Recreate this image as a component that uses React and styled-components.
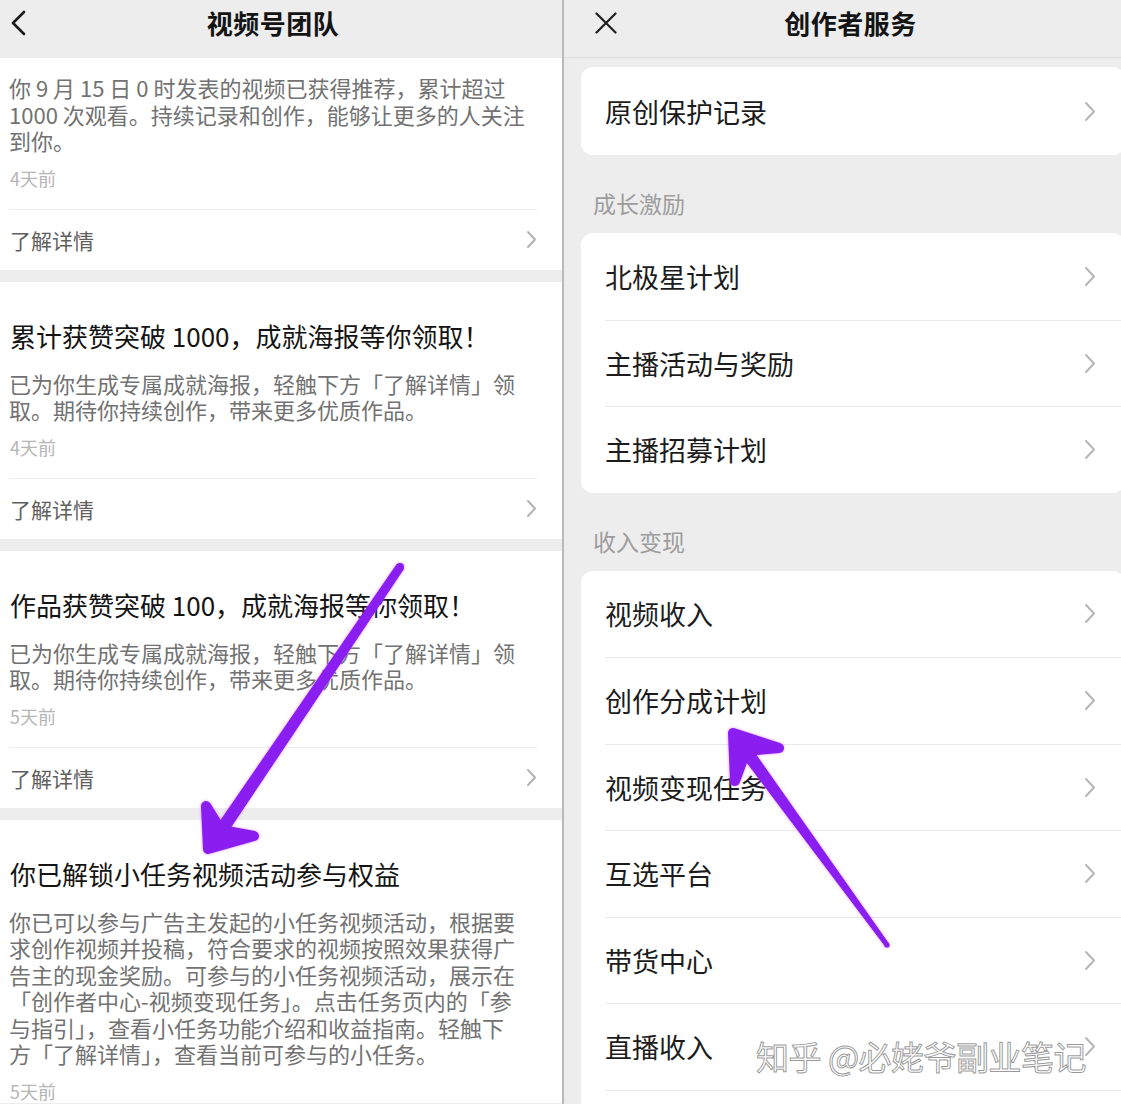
import React from "react";
import styled, { createGlobalStyle } from "styled-components";

const GlobalStyle = createGlobalStyle`
  html, body {
    margin: 0;
    padding: 0;
    background: #ededed;
  }
  body {
    font-family: "Noto Sans CJK SC", "Noto Sans", sans-serif;
    -webkit-font-smoothing: antialiased;
  }
  * {
    box-sizing: border-box;
  }
`;

const Screen = styled.div`
  position: relative;
  display: flex;
  width: 1121px;
  height: 1104px;
  overflow: hidden;
  background: #ededed;
`;

const LeftPane = styled.div`
  width: 562px;
  flex-shrink: 0;
  display: flex;
  flex-direction: column;
  background: #ededed;
  overflow: hidden;
`;

const Divider = styled.div`
  width: 2px;
  flex-shrink: 0;
  background: #b9b9b9;
`;

const RightPane = styled.div`
  position: relative;
  flex: 1;
  display: flex;
  flex-direction: column;
  background: #ededed;
  overflow: hidden;
`;

const Header = styled.header`
  height: 58px;
  flex-shrink: 0;
  display: grid;
  grid-template-columns: ${(p) => p.$cols};
  align-items: center;
  padding-bottom: 12px;
  background: #ededed;
  border-bottom: ${(p) => (p.$line ? "1px solid #dedede" : "none")};
`;

const HeaderIcon = styled.div`
  display: flex;
  align-items: center;
  padding-left: ${(p) => p.$pad}px;
`;

const HeaderTitle = styled.h1`
  margin: 0;
  text-align: center;
  font-size: 26px;
  line-height: 34px;
  font-weight: 600;
  color: #141414;
  letter-spacing: 0.5px;
`;

const Feed = styled.div`
  display: flex;
  flex-direction: column;
  gap: 12px;
`;

const Card = styled.section`
  background: #fff;
  padding-top: ${(p) => p.$top}px;
`;

const Title = styled.h3`
  margin: 0 0 17px;
  padding-left: 10px;
  font-size: 26px;
  line-height: 34px;
  font-weight: 400;
  color: #141414;
  white-space: nowrap;
`;

const Body = styled.p`
  margin: 0;
  padding-left: 9px;
  font-size: 22px;
  line-height: 26.5px;
  color: #727272;
  white-space: nowrap;
`;

const Time = styled.div`
  margin-top: 12px;
  padding-left: 10px;
  font-size: 18px;
  line-height: 24px;
  color: #b5b5b5;
`;

const Footer = styled.div`
  margin: 19px 25px 0 9px;
  height: 61px;
  border-top: 1px solid #ececec;
  display: flex;
  align-items: center;
  justify-content: space-between;
  padding-left: 1px;
  font-size: 21px;
  color: #5f5f5f;
`;

const Group = styled.div`
  margin: ${(p) => p.$mt}px -4px 0 17px;
  background: #fff;
  border-radius: 12px;
`;

const GroupLabel = styled.div`
  margin: 33px 0 15px 29px;
  font-size: 23px;
  line-height: 30px;
  color: #9d9d9d;
`;

const Row = styled.div`
  height: ${(p) => p.$h || 86.5}px;
  margin-left: 24px;
  padding-right: 29px;
  display: flex;
  align-items: center;
  justify-content: space-between;
  font-size: 27px;
  color: #1c1c1c;
  & + & {
    border-top: 1px solid #e9e9e9;
  }
`;

const Watermark = styled.div`
  position: absolute;
  left: 192px;
  top: 1036px;
  font-size: 33px;
  line-height: 40px;
  letter-spacing: -0.5px;
  color: rgba(255, 255, 255, 0.95);
  -webkit-text-stroke: 1px rgba(120, 120, 120, 0.75);
  white-space: nowrap;
  pointer-events: none;
`;

const Overlay = styled.svg`
  position: absolute;
  left: 0;
  top: 0;
  pointer-events: none;
  filter: drop-shadow(0 0 1.5px rgba(205, 90, 255, 0.7));
`;

const Chevron = ({ w = 12, h = 21, color = "#b6b6b6" }) => (
  <svg width={w} height={h} viewBox={`0 0 ${w} ${h}`}>
    <polyline
      points={`2,2 ${w - 2},${h / 2} 2,${h - 2}`}
      fill="none"
      stroke={color}
      strokeWidth="2"
      strokeLinecap="round"
      strokeLinejoin="round"
    />
  </svg>
);

const BackIcon = () => (
  <svg width="16" height="26" viewBox="0 0 16 26">
    <polyline
      points="14,2 3,13 14,24"
      fill="none"
      stroke="#1a1a1a"
      strokeWidth="2.6"
      strokeLinecap="round"
      strokeLinejoin="round"
    />
  </svg>
);

const CloseIcon = () => (
  <svg width="22" height="22" viewBox="0 0 22 22">
    <path
      d="M1.5 1.5 L20.5 20.5 M20.5 1.5 L1.5 20.5"
      stroke="#1f1f1f"
      strokeWidth="2.2"
      strokeLinecap="round"
    />
  </svg>
);

const notices = [
  {
    top: 16,
    lines: [
      "你 9 月 15 日 0 时发表的视频已获得推荐，累计超过",
      "1000 次观看。持续记录和创作，能够让更多的人关注",
      "到你。",
    ],
    time: "4天前",
    more: true,
  },
  {
    top: 37,
    title: "累计获赞突破 1000，成就海报等你领取！",
    lines: [
      "已为你生成专属成就海报，轻触下方「了解详情」领",
      "取。期待你持续创作，带来更多优质作品。",
    ],
    time: "4天前",
    more: true,
  },
  {
    top: 37,
    title: "作品获赞突破 100，成就海报等你领取！",
    lines: [
      "已为你生成专属成就海报，轻触下方「了解详情」领",
      "取。期待你持续创作，带来更多优质作品。",
    ],
    time: "5天前",
    more: true,
  },
  {
    top: 37,
    title: "你已解锁小任务视频活动参与权益",
    lines: [
      "你已可以参与广告主发起的小任务视频活动，根据要",
      "求创作视频并投稿，符合要求的视频按照效果获得广",
      "告主的现金奖励。可参与的小任务视频活动，展示在",
      "「创作者中心-视频变现任务」。点击任务页内的「参",
      "与指引」，查看小任务功能介绍和收益指南。轻触下",
      "方「了解详情」，查看当前可参与的小任务。",
    ],
    time: "5天前",
    more: false,
  },
];

const groups = [
  { label: "成长激励", items: ["北极星计划", "主播活动与奖励", "主播招募计划"] },
  {
    label: "收入变现",
    items: ["视频收入", "创作分成计划", "视频变现任务", "互选平台", "带货中心", "直播收入"],
    more: true,
  },
];

const App = () => {
  return (
    <>
      <GlobalStyle />
      <Screen>
        <LeftPane>
          <Header $cols="40px 1fr 56px">
            <HeaderIcon $pad={10}>
              <BackIcon />
            </HeaderIcon>
            <HeaderTitle>视频号团队</HeaderTitle>
            <div />
          </Header>
          <Feed>
            {notices.map((n, i) => (
              <Card key={i} $top={n.top}>
                {n.title && <Title>{n.title}</Title>}
                <Body>
                  {n.lines.map((l, j) => (
                    <React.Fragment key={j}>
                      {l}
                      {j < n.lines.length - 1 && <br />}
                    </React.Fragment>
                  ))}
                </Body>
                <Time>{n.time}</Time>
                {n.more && (
                  <Footer>
                    <span>了解详情</span>
                    <Chevron w={11} h={19} color="#b3b3b3" />
                  </Footer>
                )}
              </Card>
            ))}
          </Feed>
        </LeftPane>

        <Divider />

        <RightPane>
          <Header $cols="56px 1fr 40px" $line>
            <HeaderIcon $pad={31}>
              <CloseIcon />
            </HeaderIcon>
            <HeaderTitle>创作者服务</HeaderTitle>
            <div />
          </Header>
          <Group $mt={9}>
            <Row $h={88}>
              <span>原创保护记录</span>
              <Chevron />
            </Row>
          </Group>
          {groups.map((g) => (
            <React.Fragment key={g.label}>
              <GroupLabel>{g.label}</GroupLabel>
              <Group $mt={0}>
                {g.items.map((item) => (
                  <Row key={item}>
                    <span>{item}</span>
                    <Chevron />
                  </Row>
                ))}
                {g.more && <Row />}
              </Group>
            </React.Fragment>
          ))}
          <Watermark>知乎 @必姥爷副业笔记</Watermark>
        </RightPane>

        <Overlay width="1121" height="1104" viewBox="0 0 1121 1104">
          <g fill="#8a1df0" stroke="#8a1df0" strokeLinejoin="round">
            <circle cx="400" cy="567" r="4" stroke="none" />
            <polygon points="403.3,569.2 396.7,564.8 217,825.9 227,832.7" strokeWidth="1" />
            <polygon points="206,806 208,849 254,836 221,830" strokeWidth="10" />
            <circle cx="887" cy="945" r="2.6" stroke="none" />
            <polygon points="888.6,943.8 885.4,946.2 741.9,755.7 751.6,748.7" strokeWidth="1" />
            <polygon points="735,781 733,733 779,748 746,751" strokeWidth="10" />
          </g>
        </Overlay>
      </Screen>
    </>
  );
};

export default App;
